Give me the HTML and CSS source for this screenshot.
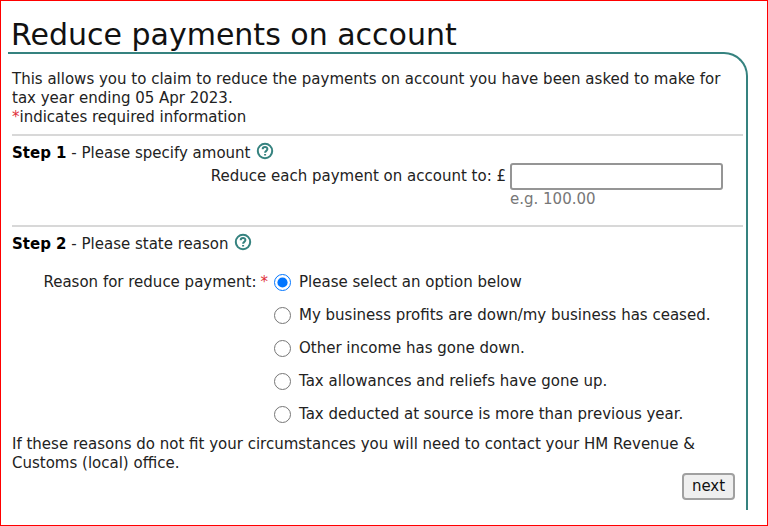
FILE: index.html
```
<!DOCTYPE html>
<html lang="en">

<head>
    <meta charset="UTF-8">
    <meta name="viewport" content="width=device-width, initial-scale=1.0">
    <title>Reduce payments on account</title>
    <link rel="stylesheet" href="styles.css">
</head>

<body>
    <h1>Reduce payments on account</h1>

    <form class="panel">
        <p class="intro">This allows you to claim to reduce the payments on account you have been asked to make for tax year ending 05 Apr 2023.</p>
        <p><span class="required">*</span>indicates required information</p>

        <hr>

        <div class="step">
            <h2><b>Step 1</b> - Please specify amount</h2>
            <svg class="help" viewBox="0 0 18 18" role="img" aria-label="Help">
                <circle cx="9" cy="9" r="7.2" />
                <path d="M6.7 7.2C6.7 4.2 11.4 4.2 11.4 7.1C11.4 8.9 9.1 8.8 9.1 10.8M9.1 12v1.5" />
            </svg>
        </div>
        <div class="amount">
            <label for="amount">Reduce each payment on account to: £</label>
            <div class="amount-field">
                <input type="text" id="amount" name="amount" aria-describedby="amountHint">
                <div class="hint" id="amountHint">e.g. 100.00</div>
            </div>
        </div>

        <hr>

        <div class="step">
            <h2><b>Step 2</b> - Please state reason</h2>
            <svg class="help" viewBox="0 0 18 18" role="img" aria-label="Help">
                <circle cx="9" cy="9" r="7.2" />
                <path d="M6.7 7.2C6.7 4.2 11.4 4.2 11.4 7.1C11.4 8.9 9.1 8.8 9.1 10.8M9.1 12v1.5" />
            </svg>
        </div>
        <div class="reason" role="radiogroup" aria-labelledby="reasonLabel">
            <div class="reason-label" id="reasonLabel">Reason for reduce payment:<span class="required">*</span></div>
            <div class="options">
                <label><input type="radio" name="reason" value="none" checked>Please select an option below</label>
                <label><input type="radio" name="reason" value="profits">My business profits are down/my business has ceased.</label>
                <label><input type="radio" name="reason" value="income">Other income has gone down.</label>
                <label><input type="radio" name="reason" value="allowances">Tax allowances and reliefs have gone up.</label>
                <label><input type="radio" name="reason" value="deducted">Tax deducted at source is more than previous year.</label>
            </div>
        </div>

        <p class="note">If these reasons do not fit your circumstances you will need to contact your HM Revenue &amp; Customs (local) office.</p>
        <div class="actions">
            <button type="button">next</button>
        </div>
    </form>
</body>

</html>
```
FILE: styles.css
```
* {
    box-sizing: border-box;
}

body {
    margin: 0;
    min-height: 100vh;
    padding: 16px 19px 14px 7px;
    border: 1px solid #ff0000;
    background-color: #fff;
    color: #222;
    font-family: Verdana, "DejaVu Sans", sans-serif;
    font-size: 15px;
    line-height: 19px;
}

h1 {
    margin: 0;
    padding-left: 3px;
    color: #111;
    font-size: 30px;
    font-weight: normal;
    line-height: 35px;
}

h2 {
    margin: 0;
    font-size: 15px;
    font-weight: normal;
}

h2 b {
    color: #000;
}

p {
    margin: 0;
}

hr {
    height: 2px;
    margin: 7px 0 0;
    border: 0;
    background-color: #d8d8d8;
}

.panel {
    padding: 16px 3px 10px 4px;
    border-top: 2px solid #35827f;
    border-right: 2px solid #35827f;
    border-top-right-radius: 24px;
}

.intro {
    padding-right: 8px;
}

.required {
    color: #e0303a;
}

.step {
    display: flex;
    gap: 6px;
    padding-top: 8px;
}

.help {
    width: 18px;
    height: 18px;
    margin-top: -2px;
    fill: none;
    stroke: #35827f;
    stroke-width: 2;
}

.amount {
    display: flex;
    justify-content: flex-end;
    gap: 4px;
    padding-right: 20px;
}

.amount label {
    padding-top: 4px;
}

.amount-field {
    width: 213px;
    padding-bottom: 9px;
}

.amount-field input {
    display: block;
    width: 100%;
    height: 27px;
    border: 2px solid #959595;
    border-radius: 3px;
    font: inherit;
}

.hint {
    color: #777;
}

.reason {
    display: flex;
    gap: 6px;
    padding-top: 19px;
}

.reason-label {
    width: 256px;
    text-align: right;
}

.reason-label .required {
    margin-left: 4px;
}

.options {
    display: flex;
    flex-direction: column;
    gap: 14px;
}

.options label {
    display: flex;
    align-items: center;
    gap: 8px;
}

.options input {
    width: 17px;
    height: 17px;
    margin: 0;
}

.note {
    padding-top: 11px;
}

.actions {
    display: flex;
    justify-content: flex-end;
    padding-right: 8px;
}

button {
    width: 53px;
    height: 27px;
    padding: 0;
    border: 2px solid #a0a0a0;
    border-radius: 4px;
    background-color: #efefef;
    color: #111;
    font: inherit;
}
```
